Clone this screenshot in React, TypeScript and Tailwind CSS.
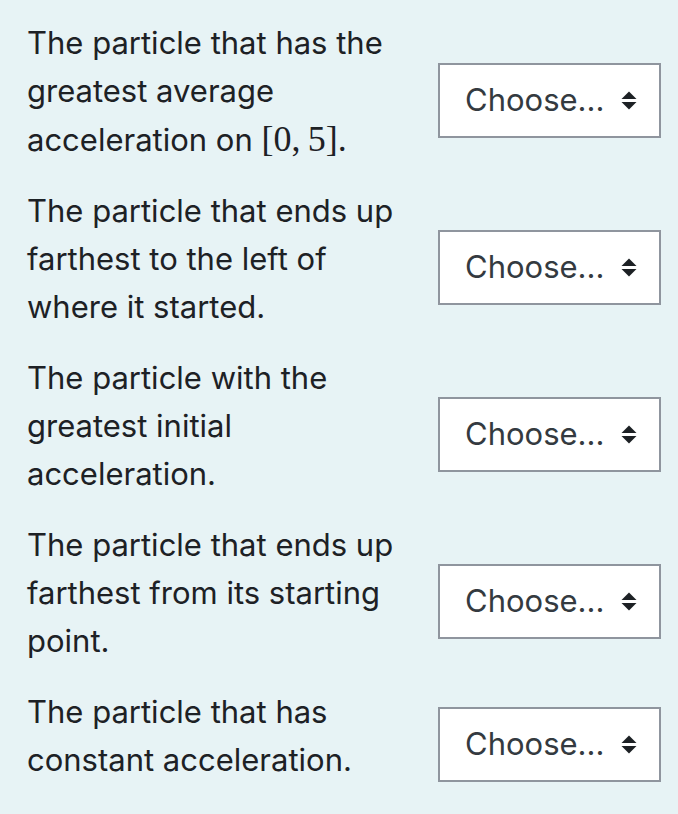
import React from "react";

const rows: { label: React.ReactNode }[] = [
  {
    label: (
      <>
        The particle that has the greatest average acceleration on{" "}
        <span className="font-['Liberation_Serif',serif] text-[36px]">[0,&#8201;5].</span>
      </>
    ),
  },
  { label: "The particle that ends up farthest to the left of where it started." },
  { label: "The particle with the greatest initial acceleration." },
  { label: "The particle that ends up farthest from its starting point." },
  { label: "The particle that has constant acceleration." },
];

function Arrows() {
  return (
    <svg width="16" height="19" viewBox="0 0 16 19" className="shrink-0">
      <path d="M8 0.5 L15.5 8 L0.5 8 Z" fill="#1d2125" />
      <path d="M0.5 11 L15.5 11 L8 18.5 Z" fill="#1d2125" />
    </svg>
  );
}

export default function App() {
  return (
    <div className="min-h-[814px] w-full bg-[#e7f3f5] pt-[19px] pl-[27px] font-['Inter',sans-serif] text-[#1d2125]">
      {rows.map((r, i) => (
        <div key={i} className="flex items-center mb-[23px]">
          <div className="w-[395px] shrink-0 text-[31px] leading-[48px]">{r.label}</div>
          <div className="ml-[16px] mt-[17px] w-[223px] h-[75px] shrink-0 border-2 border-[#8f959e] bg-white flex items-center pl-[25px] gap-[17px]">
            <span className="text-[31px] text-[#343a40]">Choose...</span>
            <Arrows />
          </div>
        </div>
      ))}
    </div>
  );
}
